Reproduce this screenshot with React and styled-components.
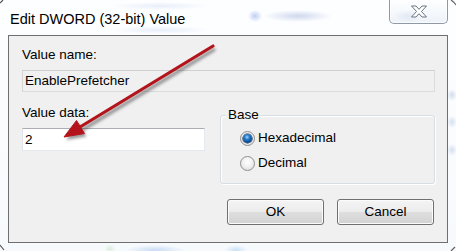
import React from "react";
import styled, { createGlobalStyle } from "styled-components";

const Global = createGlobalStyle`
  html, body { margin: 0; padding: 0; width: 456px; height: 251px; overflow: hidden; background: #fff; }
  #root { width: 456px; height: 251px; }
`;

const Screen = styled.div`
  position: relative;
  width: 456px;
  height: 251px;
  overflow: hidden;
  display: flex;
  flex-direction: column;
  font-family: "Liberation Sans", Arial, sans-serif;
  color: #000;
  background:
    radial-gradient(ellipse 7px 6px at 255px 16px, rgba(140,165,230,0.55), transparent),
    radial-gradient(ellipse 34px 6px at 298px 16px, rgba(150,170,215,0.45), transparent),
    radial-gradient(ellipse 14px 6px at 408px 16px, rgba(160,180,220,0.4), transparent),
    radial-gradient(ellipse 50px 4px at 160px 6px, rgba(200,215,240,0.4), transparent),
    radial-gradient(ellipse 50px 4px at 160px 30px, rgba(200,215,240,0.4), transparent),
    radial-gradient(ellipse 5px 6px at 452px 95px, rgba(175,195,225,0.55), transparent),
    radial-gradient(ellipse 5px 6px at 452px 122px, rgba(175,195,225,0.5), transparent),
    radial-gradient(ellipse 5px 6px at 452px 150px, rgba(175,195,225,0.5), transparent),
    radial-gradient(ellipse 30px 5px at 155px 250px, rgba(170,200,240,0.6), transparent),
    radial-gradient(ellipse 12px 5px at 236px 250px, rgba(170,210,245,0.6), transparent),
    radial-gradient(ellipse 6px 5px at 110px 249px, rgba(190,225,190,0.5), transparent),
    linear-gradient(#fdfeff, #f7fafd);
`;

const TitleBar = styled.div`
  height: 35px;
  flex: none;
  box-sizing: border-box;
  padding: 0 8px 0 10px;
  display: flex;
  justify-content: space-between;
  align-items: flex-start;
`;

const Title = styled.div`
  margin-top: 10.5px;
  font-size: 14.5px;
  line-height: 17px;
  text-shadow: 0 0 6px #fff;
`;

const CloseButton = styled.div`
  width: 59px;
  height: 24px;
  box-sizing: border-box;
  border: 1px solid #8e99a8;
  border-top: none;
  border-radius: 0 0 5px 5px;
  background: linear-gradient(rgba(255,255,255,0.55), rgba(225,233,245,0.55));
  box-shadow: inset 0 0 0 1px rgba(255,255,255,0.7);
  display: flex;
  align-items: center;
  justify-content: center;
`;

const Client = styled.div`
  margin-left: 8px;
  width: 440px;
  height: 208px;
  box-sizing: border-box;
  border: 1px solid #6f6f6f;
  background: #f0f0f0;
  padding: 11px 12px 0 13px;
  display: flex;
  flex-direction: column;
  font-size: 13.5px;
`;

const Label = styled.div`
  line-height: 16px;
  height: 16px;
`;

const Field = styled.div`
  margin-top: 7px;
  height: ${(p) => p.$h}px;
  box-sizing: border-box;
  padding-left: 2px;
  line-height: ${(p) => p.$h - 2}px;
  border: 1px solid;
  border-color: ${(p) => (p.$readOnly ? "#cfcfcf #dcdcdc #dcdcdc #d4d4d4" : "#abadb3 #e3e9ef #e3e9ef #e2e3ea")};
  background: ${(p) => (p.$readOnly ? "#f0f0f0" : "#fff")};
  white-space: nowrap;
`;

const DataRow = styled.div`
  margin-top: 13px;
  display: flex;
  gap: 15px;
  align-items: flex-start;
`;

const Column = styled.div`
  width: 183px;
  display: flex;
  flex-direction: column;
`;

const GroupBox = styled.div`
  position: relative;
  margin-top: 10px;
  width: 215px;
  height: 69px;
  box-sizing: border-box;
  border: 1px solid #d5dfe5;
  border-radius: 3px;
  box-shadow: inset 1px 1px 0 #fff, 1px 1px 0 #fff;
  padding: 14px 0 0 19px;
  display: flex;
  flex-direction: column;
  gap: 9px;
`;

const Legend = styled.div`
  position: absolute;
  top: -9px;
  left: 5px;
  padding: 0 2px;
  background: #f0f0f0;
  line-height: 16px;
`;

const RadioRow = styled.div`
  height: 16px;
  line-height: 16px;
  display: flex;
  align-items: center;
  gap: 3px;
`;

const RadioCircle = styled.span`
  width: 15px;
  height: 15px;
  box-sizing: border-box;
  border-radius: 50%;
  border: 1px solid #8f9090;
  background: radial-gradient(circle at 50% 40%, #ffffff 0%, #f1f1f1 45%, #d6d6d6 100%);
  display: flex;
  align-items: center;
  justify-content: center;
  flex: none;
  &::after {
    content: "";
    display: ${(p) => (p.$checked ? "block" : "none")};
    width: 9px;
    height: 9px;
    border-radius: 50%;
    background: radial-gradient(circle at 45% 35%, #9fd6ff 0%, #2a7fd0 30%, #0e4f9a 60%, #072a58 100%);
    box-shadow: 0 0 0 0.6px #06264f;
  }
`;

const ButtonRow = styled.div`
  margin-top: 15px;
  padding-right: 1px;
  display: flex;
  justify-content: flex-end;
  gap: 13px;
`;

const Button = styled.div`
  width: 97px;
  height: 26px;
  box-sizing: border-box;
  border: 1px solid #707070;
  border-radius: 3px;
  background: linear-gradient(#f4f4f4 0%, #ececec 48%, #dedede 52%, #d2d2d2 100%);
  box-shadow: inset 0 0 0 1px #fbfbfb;
  display: flex;
  align-items: center;
  justify-content: center;
  line-height: 16px;
`;

const Overlay = styled.svg`
  position: absolute;
  left: 0;
  top: 0;
  pointer-events: none;
`;

function CloseGlyph() {
  return (
    <svg width="18" height="13" viewBox="0 0 18 13">
      <path
        d="M1.5 1 H6 L9 4.3 L12 1 H16.5 L11.5 6.5 L16.5 12 H12 L9 8.7 L6 12 H1.5 L6.5 6.5 Z"
        fill="#fff"
        stroke="#6b7480"
        strokeWidth="1"
        strokeLinejoin="round"
      />
    </svg>
  );
}

function Arrow() {
  const shaft = "M213 46 L80 127";
  const head = "M64 137 L84.5 133.5 L76.5 120.5 Z";
  return (
    <Overlay width="456" height="251" viewBox="0 0 456 251">
      <defs>
        <filter id="sh" x="-20%" y="-20%" width="140%" height="140%">
          <feGaussianBlur stdDeviation="1.4" />
        </filter>
      </defs>
      <g transform="translate(2 3)" filter="url(#sh)" opacity="0.5">
        <path d={shaft} stroke="#333" strokeWidth="3.4" fill="none" />
        <path d={head} fill="#333" />
      </g>
      <path d={shaft} stroke="#b3141c" strokeWidth="3.2" fill="none" strokeLinecap="round" />
      <path d={head} fill="#b3141c" stroke="#b3141c" strokeWidth="1" strokeLinejoin="round" />
      <path d="M0 3 L3 0" stroke="#555" strokeWidth="1.2" />
      <path d="M451 0 Q454 2 456 5" stroke="#666" strokeWidth="1.2" fill="none" />
      <path d="M0 245 L4 250" stroke="#555" strokeWidth="1.2" />
      <path d="M451 251 L455 247" stroke="#666" strokeWidth="1.2" />
    </Overlay>
  );
}

export default function App() {
  return (
    <>
      <Global />
      <Screen>
        <TitleBar>
          <Title>Edit DWORD (32-bit) Value</Title>
          <CloseButton>
            <CloseGlyph />
          </CloseButton>
        </TitleBar>
        <Client>
          <Label>Value name:</Label>
          <Field $h={22} $readOnly>EnablePrefetcher</Field>
          <DataRow>
            <Column>
              <Label>Value data:</Label>
              <Field $h={23}>2</Field>
            </Column>
            <GroupBox>
              <Legend>Base</Legend>
              <RadioRow>
                <RadioCircle $checked />
                Hexadecimal
              </RadioRow>
              <RadioRow>
                <RadioCircle />
                Decimal
              </RadioRow>
            </GroupBox>
          </DataRow>
          <ButtonRow>
            <Button>OK</Button>
            <Button>Cancel</Button>
          </ButtonRow>
        </Client>
        <Arrow />
      </Screen>
    </>
  );
}
